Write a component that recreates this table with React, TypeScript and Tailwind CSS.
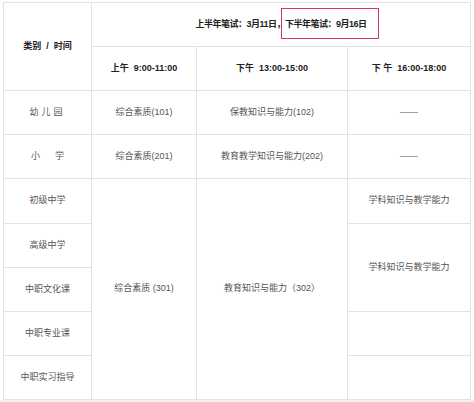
import React from "react";

const B = "border border-[#e2e2e2]";

export default function App() {
  return (
    <div className="w-[474px] h-[402px] bg-white overflow-hidden flex flex-col" style={{ fontFamily: '"Liberation Sans", "Noto Sans CJK SC", sans-serif' }}>
      <div className="pl-[3px] pt-[2px] bg-white">
        <table className="table-fixed border-collapse w-[467px] text-[9px] text-[#555] text-center">
          <colgroup>
            <col className="w-[88px]" />
            <col className="w-[105px]" />
            <col className="w-[151px]" />
            <col className="w-[123px]" />
          </colgroup>
          <tbody>
            <tr className="h-[44px]">
              <td rowSpan={2} className={`${B} font-bold text-[#222]`}>
                类别&nbsp;&nbsp;/&nbsp;&nbsp;时间
              </td>
              <td colSpan={3} className={`${B} font-bold text-[#222] tracking-[-0.5px]`}>
                <span className="relative inline-block">
                  上半年笔试：3月11日，
                  <span className="relative inline-block">
                    下半年笔试：9月16日
                    <span className="absolute left-[-4px] right-[-12px] top-[-10px] bottom-[-8px] border border-[#d63a50]" />
                  </span>
                </span>
              </td>
            </tr>
            <tr className="h-[44px]">
              <td className={`${B} font-bold text-[#222]`}>上午&nbsp;&nbsp;9:00-11:00</td>
              <td className={`${B} font-bold text-[#222]`}>下午&nbsp;&nbsp;13:00-15:00</td>
              <td className={`${B} font-bold text-[#222]`}>下&nbsp;午&nbsp;&nbsp;16:00-18:00</td>
            </tr>
            <tr className="h-[44px]">
              <td className={`${B} tracking-[3px]`}>幼儿园</td>
              <td className={B}>综合素质(101)</td>
              <td className={B}>保教知识与能力(102)</td>
              <td className={B}>——</td>
            </tr>
            <tr className="h-[44px]">
              <td className={B}>小&nbsp;&nbsp;&nbsp;&nbsp;&nbsp;&nbsp;学</td>
              <td className={B}>综合素质(201)</td>
              <td className={B}>教育教学知识与能力(202)</td>
              <td className={B}>——</td>
            </tr>
            <tr className="h-[45px]">
              <td className={B}>初级中学</td>
              <td rowSpan={5} className={B}>综合素质 (301)</td>
              <td rowSpan={5} className={B}>教育知识与能力（302）</td>
              <td className={B}>学科知识与教学能力</td>
            </tr>
            <tr className="h-[44px]">
              <td className={B}>高级中学</td>
              <td rowSpan={2} className={B}>学科知识与教学能力</td>
            </tr>
            <tr className="h-[44px]">
              <td className={B}>中职文化课</td>
            </tr>
            <tr className="h-[44px]">
              <td className={B}>中职专业课</td>
              <td className={B}></td>
            </tr>
            <tr className="h-[44px]">
              <td className={B}>中职实习指导</td>
              <td className={B}></td>
            </tr>
          </tbody>
        </table>
      </div>
      <div className="flex-1 bg-[#f0f0f0]" />
    </div>
  );
}
